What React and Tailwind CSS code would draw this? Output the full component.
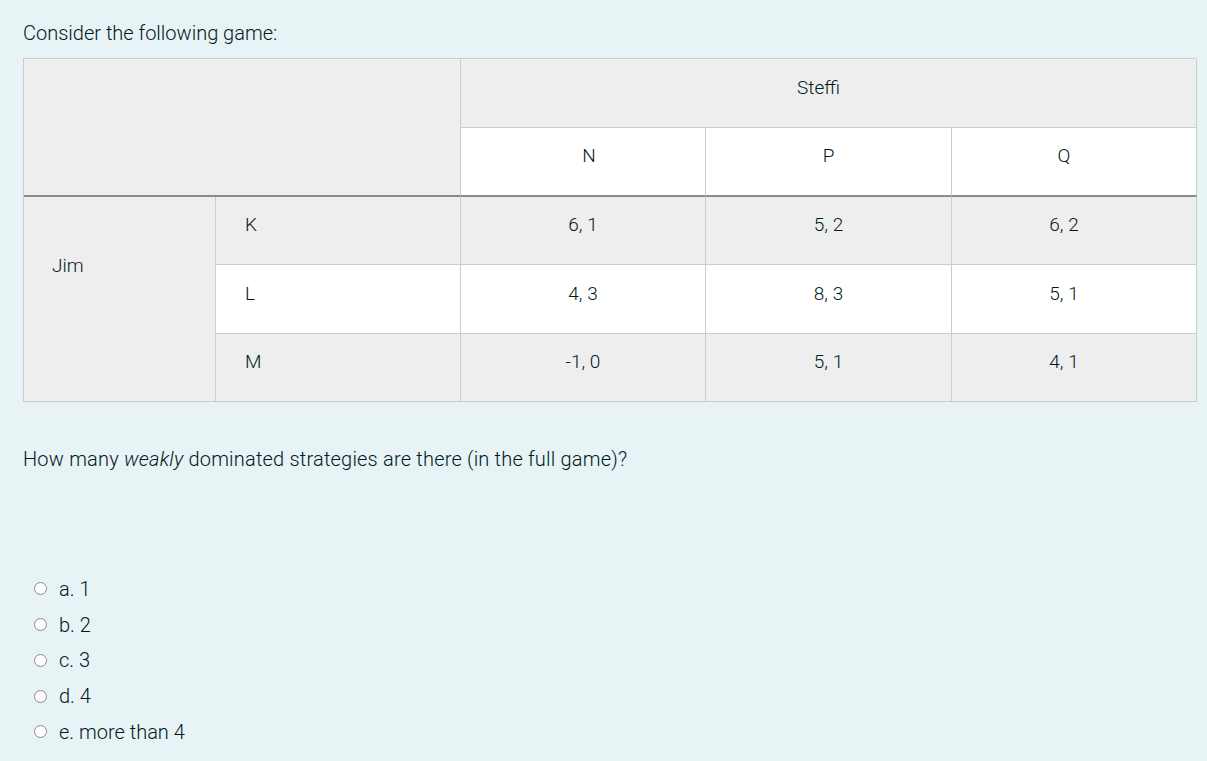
import React from 'react';

const options = ['a. 1', 'b. 2', 'c. 3', 'd. 4', 'e. more than 4'];

const rows = [
  { label: 'K', cells: ['6, 1', '5, 2', '6, 2'], bg: 'bg-[#eeeeee]', pt: 'pt-4' },
  { label: 'L', cells: ['4, 3', '8, 3', '5, 1'], bg: 'bg-white', pt: 'pt-[17px]' },
  { label: 'M', cells: ['-1, 0', '5, 1', '4, 1'], bg: 'bg-[#eeeeee]', pt: 'pt-4' },
];

// per-column horizontal nudges so text lands where the original puts it
const colPad = ['', '', 'pr-[20px]'];

export default function App() {
  return (
    <div
      className="min-h-[761px] bg-[#e7f3f5] pl-[23px] pr-[11px] pt-[21px] text-[20px] leading-6 font-light text-[#001a1e]"
      style={{ fontFamily: 'Roboto, "Liberation Sans", sans-serif' }}
    >
      <p>Consider the following game:</p>

      {/* Payoff matrix */}
      <div className="mt-[13px] grid grid-cols-[192px_245px_245px_246px_245px] grid-rows-[69px_69px_68px_69px_68px] border-l border-t border-[#cccccc] text-[19px]">
        <div className="col-span-2 row-span-2 border-r border-b-2 border-r-[#cccccc] border-b-[#8a8a8a] bg-[#eeeeee]" />
        <div className="col-span-3 border-r border-b border-[#cccccc] bg-[#eeeeee] pt-[17px] pr-[20px] text-center">Steffi</div>
        {['N', 'P', 'Q'].map((c, i) => (
          <div
            key={c}
            className={`border-r border-b-2 border-r-[#cccccc] border-b-[#8a8a8a] bg-white pt-4 text-center ${i === 0 ? 'pl-[12px]' : colPad[i]}`}
          >
            {c}
          </div>
        ))}
        <div className="row-span-3 row-start-3 border-r border-b border-[#cccccc] bg-[#eeeeee] pl-[28px] pt-[57px]">Jim</div>
        {rows.map((r) => (
          <React.Fragment key={r.label}>
            <div className={`border-r border-b border-[#cccccc] ${r.bg} ${r.pt} pl-[29px]`}>{r.label}</div>
            {r.cells.map((v, i) => (
              <div key={i} className={`border-r border-b border-[#cccccc] ${r.bg} ${r.pt} ${colPad[i]} text-center`}>
                {v}
              </div>
            ))}
          </React.Fragment>
        ))}
      </div>

      <p className="mt-[45px] tracking-[0.2px]">
        How many <em>weakly</em> dominated strategies are there (in the full game)?
      </p>

      {/* Answers */}
      <div className="mt-[100px] flex flex-col pl-[11px]">
        {options.map((o) => (
          <label key={o} className="flex h-[35.75px] items-center gap-[12px]">
            <span className="h-[13px] w-[13px] rounded-full border-[1.5px] border-[#8a8a8a] bg-white" />
            <span>{o}</span>
          </label>
        ))}
      </div>
    </div>
  );
}
